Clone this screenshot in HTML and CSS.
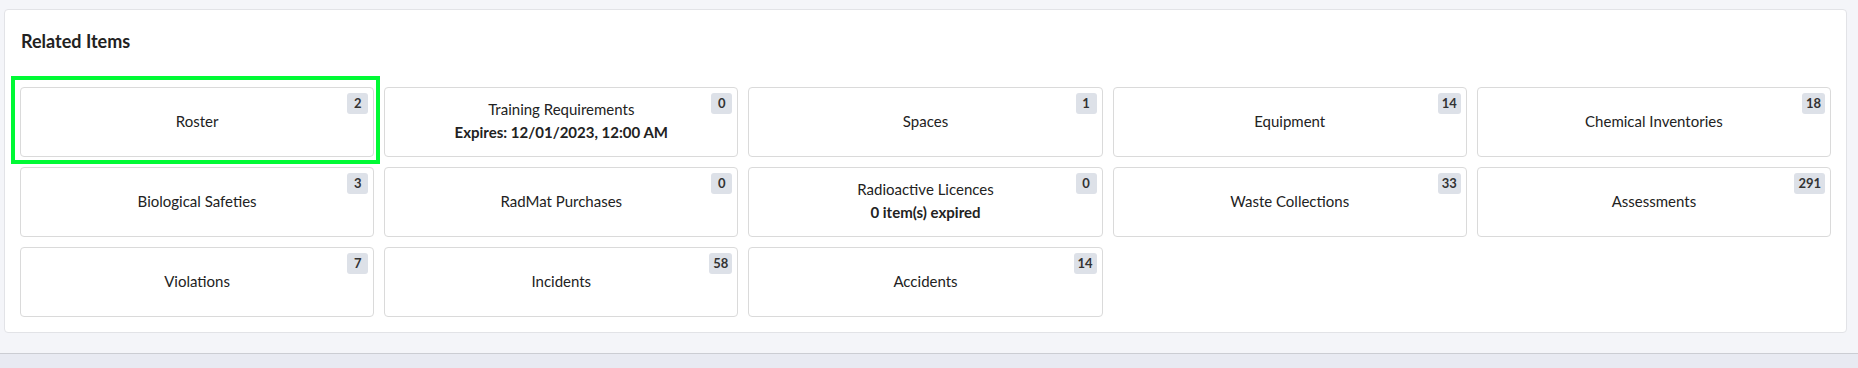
FILE: index.html
```html
<!DOCTYPE html>
<html lang="en">
<head>
	<meta charset="UTF-8">
	<title>Related Items</title>
	<link rel="stylesheet" href="styles.css">
</head>
<body>
	<main class="page">
		<section class="panel">
			<h2 class="panel-title">Related Items</h2>
			<ul class="items">
				<li class="item item-active"><span class="item-name">Roster</span><span class="badge">2</span></li>
				<li class="item"><span class="item-name">Training Requirements</span><strong class="item-note">Expires: 12/01/2023, 12:00 AM</strong><span class="badge">0</span></li>
				<li class="item"><span class="item-name">Spaces</span><span class="badge">1</span></li>
				<li class="item"><span class="item-name">Equipment</span><span class="badge">14</span></li>
				<li class="item"><span class="item-name">Chemical Inventories</span><span class="badge">18</span></li>
				<li class="item"><span class="item-name">Biological Safeties</span><span class="badge">3</span></li>
				<li class="item"><span class="item-name">RadMat Purchases</span><span class="badge">0</span></li>
				<li class="item"><span class="item-name">Radioactive Licences</span><strong class="item-note">0 item(s) expired</strong><span class="badge">0</span></li>
				<li class="item"><span class="item-name">Waste Collections</span><span class="badge">33</span></li>
				<li class="item"><span class="item-name">Assessments</span><span class="badge">291</span></li>
				<li class="item"><span class="item-name">Violations</span><span class="badge">7</span></li>
				<li class="item"><span class="item-name">Incidents</span><span class="badge">58</span></li>
				<li class="item"><span class="item-name">Accidents</span><span class="badge">14</span></li>
			</ul>
		</section>
	</main>
	<footer class="footer"></footer>
</body>
</html>
```
FILE: styles.css
```css
body {
	background: #f4f5f9;
	color: #222;
	font-family: Lato, "Open Sans", sans-serif;
	margin: 0px;
}
.page {
	padding: 9px 11px 20px 4px;
}
.panel {
	background: #fff;
	border: 1px solid #e2e3e7;
	border-radius: 4px;
	padding: 15px;
}
.panel-title {
	font-size: 18px;
	font-weight: 700;
	line-height: 20px;
	margin: 6px 0px 0px 1px;
}
.items {
	display: grid;
	gap: 10px;
	grid-template-columns: repeat(5, 1fr);
	list-style: none;
	margin: 36px 0px 0px 0px;
	padding: 0px;
}
.item {
	align-items: center;
	border: 1px solid #dadada;
	border-radius: 4px;
	box-sizing: border-box;
	display: flex;
	flex-direction: column;
	font-size: 15px;
	height: 70px;
	justify-content: center;
	line-height: 23px;
	padding-bottom: 2px;
	position: relative;
}
.item-note {
	font-weight: 700;
}
.item-active::before {
	border: 4px solid #00fa35;
	bottom: -8px;
	content: "";
	left: -10px;
	position: absolute;
	right: -7px;
	top: -12px;
}
.badge {
	background: #dde1e8;
	border-radius: 3px;
	box-sizing: border-box;
	color: #333;
	font-size: 13px;
	font-weight: 700;
	height: 21px;
	line-height: 21px;
	min-width: 21px;
	padding: 0px 4px;
	position: absolute;
	right: 5px;
	text-align: center;
	top: 5px;
}
.footer {
	background: #e8eaf2;
	border-top: 1px solid #cbcdd3;
	height: 15px;
}
```
